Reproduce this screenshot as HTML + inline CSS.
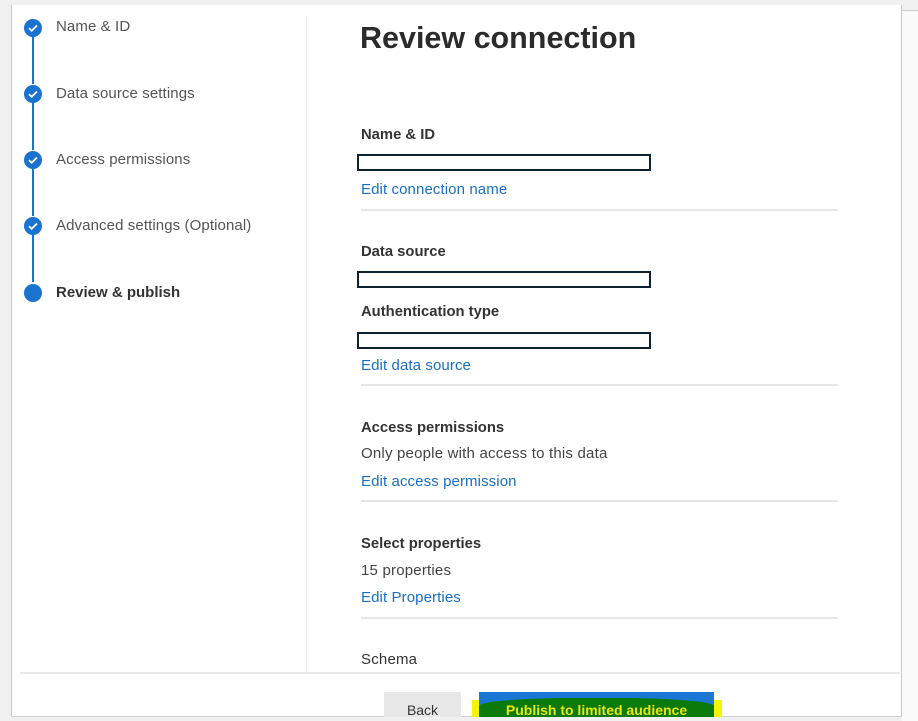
<!DOCTYPE html>
<html><head><style>
body{margin:0;width:918px;height:720px;background:#f0f0f0;position:relative;overflow:hidden;font-family:"Liberation Sans",Arial,sans-serif;}
.panel{position:absolute;left:11px;top:5px;width:889px;height:711px;background:#fff;border-left:1px solid #c8c8c8;border-right:1px solid #c8c8c8;border-bottom:1px solid #d0d0d0;}
.rightbg{position:absolute;left:902px;top:10px;width:16px;height:710px;background:#fafafa;border-top:1px solid #ccc;}
.a{position:absolute;}
.step{position:absolute;left:56px;font-size:15px;color:#555;letter-spacing:0.1px}
.dot{position:absolute;left:24px;width:18px;height:18px;border-radius:50%;background:#1a73d1;}
.vl{position:absolute;left:32px;width:2px;background:#1a73d1;}
.h{position:absolute;left:361px;font-size:14.8px;font-weight:bold;color:#333;}
.t{position:absolute;left:361px;font-size:15px;color:#444;letter-spacing:0.2px}
.lk{position:absolute;left:361px;font-size:15px;color:#1a6fc4;letter-spacing:0.1px}
.box{position:absolute;left:357px;width:290px;height:13px;border:2px solid #0c2230;}
.sep{position:absolute;left:361px;width:477px;height:2px;background:#e6e6e6;}
</style></head><body>
<div class="rightbg"></div>
<div class="panel"></div>
<div class="a" style="left:306px;top:16px;width:1px;height:656px;background:#ececec"></div>
<div class="a" style="left:20px;top:672px;width:880px;height:2px;background:#ebebeb"></div>

<div class="vl" style="top:36px;height:48px"></div>
<div class="vl" style="top:102px;height:48px"></div>
<div class="vl" style="top:168px;height:48px"></div>
<div class="vl" style="top:234px;height:48px"></div>
<svg class="a" style="left:24px;top:19px" width="18" height="18"><circle cx="9" cy="9" r="9" fill="#1a73d1"/><path d="M5 9.2l2.7 2.6L13 6.5" stroke="#fff" stroke-width="1.8" fill="none"/></svg>
<svg class="a" style="left:24px;top:85px" width="18" height="18"><circle cx="9" cy="9" r="9" fill="#1a73d1"/><path d="M5 9.2l2.7 2.6L13 6.5" stroke="#fff" stroke-width="1.8" fill="none"/></svg>
<svg class="a" style="left:24px;top:151px" width="18" height="18"><circle cx="9" cy="9" r="9" fill="#1a73d1"/><path d="M5 9.2l2.7 2.6L13 6.5" stroke="#fff" stroke-width="1.8" fill="none"/></svg>
<svg class="a" style="left:24px;top:217px" width="18" height="18"><circle cx="9" cy="9" r="9" fill="#1a73d1"/><path d="M5 9.2l2.7 2.6L13 6.5" stroke="#fff" stroke-width="1.8" fill="none"/></svg>
<div class="dot" style="top:284px"></div>
<div class="step" style="top:18px">Name &amp; ID</div>
<div class="step" style="top:85px">Data source settings</div>
<div class="step" style="top:151px">Access permissions</div>
<div class="step" style="top:217px">Advanced settings (Optional)</div>
<div class="step" style="top:284px;font-weight:bold;color:#333;letter-spacing:0">Review &amp; publish</div>

<div class="a" style="left:360px;top:21px;font-size:30.5px;font-weight:bold;color:#2b2b2b">Review connection</div>

<div class="h" style="top:127px">Name &amp; ID</div>
<div class="box" style="top:154px"></div>
<div class="lk" style="top:181px">Edit connection name</div>
<div class="sep" style="top:209px"></div>

<div class="h" style="top:244px">Data source</div>
<div class="box" style="top:271px"></div>
<div class="h" style="top:304px">Authentication type</div>
<div class="box" style="top:332px"></div>
<div class="lk" style="top:357px">Edit data source</div>
<div class="sep" style="top:384px"></div>

<div class="h" style="top:420px">Access permissions</div>
<div class="t" style="top:445px">Only people with access to this data</div>
<div class="lk" style="top:473px">Edit access permission</div>
<div class="sep" style="top:500px"></div>

<div class="h" style="top:536px">Select properties</div>
<div class="t" style="top:562px">15 properties</div>
<div class="lk" style="top:589px">Edit Properties</div>
<div class="sep" style="top:617px"></div>

<div class="t" style="top:651px;color:#333">Schema</div>

<div class="a" style="left:384px;top:692px;width:77px;height:25px;background:#e8e8e8;overflow:hidden;"><div style="text-align:center;margin-top:10px;font-size:14px;color:#333">Back</div></div>
<div class="a" style="left:472px;top:700px;width:250px;height:17px;background:#f5f50a"></div>
<div class="a" style="left:479px;top:692px;width:235px;height:25px;background:#1a78d4;overflow:hidden;">
<div style="position:absolute;left:0;top:6px;width:235px;height:20px;background:#0a7a0a;border-radius:40% 40% 0 0/8px 8px 0 0"></div>
<div style="position:absolute;left:0;width:235px;top:10px;text-align:center;font-size:14px;font-weight:bold;color:#e6e612">Publish to limited audience</div></div>
</body></html>
